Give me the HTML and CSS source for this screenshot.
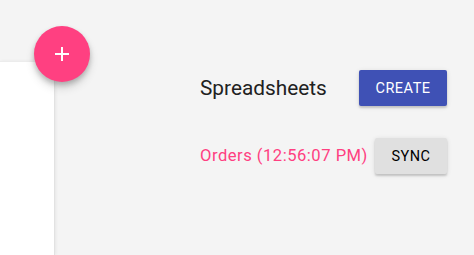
FILE: index.html
```html
<!DOCTYPE html>
<html>
<head>
<meta charset="utf-8">
<link rel="stylesheet" href="styles.css">
</head>
<body>
<div class="app">
  <div class="drawer"></div>
  <main class="main">
    <div class="row">
      <span class="title">Spreadsheets</span>
      <button class="btn btn-primary">CREATE</button>
    </div>
    <div class="row">
      <span class="sheet">Orders (12:56:07 PM)</span>
      <button class="btn btn-default">SYNC</button>
    </div>
  </main>
  <button class="fab" aria-label="Add">
    <svg width="14" height="14" viewBox="0 0 14 14"><path d="M7 0v14M0 7h14" stroke="#fff" stroke-width="2" fill="none"/></svg>
  </button>
</div>
</body>
</html>
```

FILE: styles.css
```css
html, body {
  margin: 0;
  padding: 0;
  height: 100%;
  background: #f4f4f4;
  font-family: Roboto, "Liberation Sans", Arial, sans-serif;
  overflow: hidden;
}
.app {
  position: relative;
  display: flex;
  height: 100%;
}
.drawer {
  width: 54px;
  margin-top: 61px;
  background: #fff;
  border-right: 1px solid #e2e2e2;
  border-top: 1px solid #ececec;
  box-shadow: 1px 0 3px rgba(0,0,0,0.06);
  flex: none;
}
.main {
  padding: 70px 0 0 145px;
  width: 247px;
  display: flex;
  flex-direction: column;
  gap: 32px;
}
.row {
  display: flex;
  align-items: center;
  justify-content: space-between;
}
.title {
  font-size: 20.8px;
  color: #212121;
}
.sheet {
  font-size: 16.6px;
  letter-spacing: 0.5px;
  color: #ff4081;
  position: relative;
  top: -1px;
}
.btn {
  height: 36px;
  border: none;
  border-radius: 2px;
  font-family: Roboto, "Liberation Sans", Arial, sans-serif;
  font-size: 14.5px;
  font-weight: 400;
  letter-spacing: 0.5px;
  padding: 0;
  box-shadow: 0 2px 2px rgba(0,0,0,0.14), 0 1px 5px rgba(0,0,0,0.12);
}
.btn-primary {
  width: 88px;
  background: #3f51b5;
  color: #fff;
}
.btn-default {
  width: 72px;
  background: #e0e0e0;
  color: #000;
}
.fab {
  position: absolute;
  left: 34px;
  top: 26px;
  width: 56px;
  height: 56px;
  border-radius: 50%;
  border: none;
  padding: 0;
  background: #ff4081;
  display: flex;
  align-items: center;
  justify-content: center;
  box-shadow: 0 3px 5px rgba(0,0,0,0.2), 0 6px 10px rgba(0,0,0,0.14);
}
```
